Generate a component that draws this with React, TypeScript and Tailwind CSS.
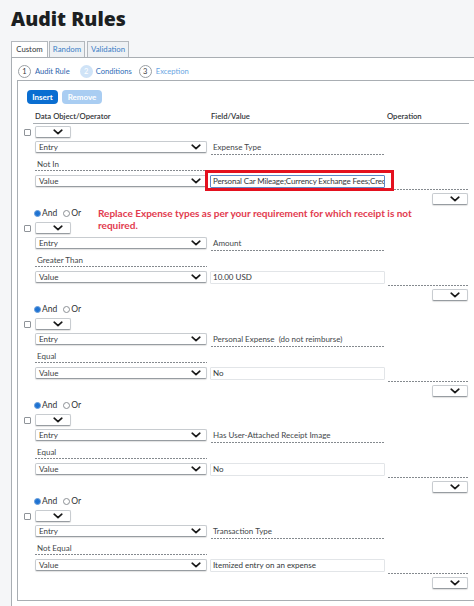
import React from "react";

const DASH =
  "h-px w-full bg-[linear-gradient(to_right,#858a8f_60%,transparent_60%)] bg-[length:3px_1px] bg-repeat-x";

function Chevron() {
  return (
    <svg width="10" height="6" viewBox="0 0 10 6" className="shrink-0">
      <path
        d="M1.2 1.2 L5 4.6 L8.8 1.2"
        fill="none"
        stroke="#1a1a1a"
        strokeWidth="1.7"
        strokeLinecap="round"
        strokeLinejoin="round"
      />
    </svg>
  );
}

function SmallSelect() {
  return (
    <div className="w-[36px] h-[12px] bg-white border border-[#c8ccd0] border-b-[#979ca1] rounded-[2px] shadow-[0_1px_1px_rgba(0,0,0,0.12)] flex items-center justify-end pr-[7px]">
      <Chevron />
    </div>
  );
}

function BigSelect({ label }: { label: string }) {
  return (
    <div className="w-[172px] h-[12px] shrink-0 bg-white border border-[#c8ccd0] border-b-[#979ca1] rounded-[2px] shadow-[0_1px_1px_rgba(0,0,0,0.12)] flex items-center justify-between pl-[3px] pr-[5px]">
      <span className="text-[8px] leading-[10px] text-[#3a3d40]">{label}</span>
      <Chevron />
    </div>
  );
}

function Radio({ on }: { on: boolean }) {
  return on ? (
    <span className="w-[7px] h-[7px] rounded-full bg-[#1f73d2] border border-[#6a9fdc] inline-block" />
  ) : (
    <span className="w-[7px] h-[7px] rounded-full bg-white border border-[#8b9095] inline-block" />
  );
}

type Cond = {
  field: string;
  op: string;
  value: string;
  first?: boolean;
};

function Block({ c }: { c: Cond }) {
  return (
    <div className="flex flex-col">
      {c.first ? (
        <div className="ml-[15px] w-[436px] h-[14px] border-b border-[#a9aeb3] flex items-center text-[7.7px] font-semibold text-[#2f3336]">
          <span className="pl-[2px] w-[178px]">Data Object/Operator</span>
          <span className="w-[176px]">Field/Value</span>
          <span>Operation</span>
        </div>
      ) : (
        <div className="h-[14px] flex items-center pl-[16px] text-[8.5px] text-[#2f3336]">
          <Radio on />
          <span className="ml-[1px]">And</span>
          <span className="ml-[6px] flex items-center">
            <Radio on={false} />
          </span>
          <span className="ml-[1px]">Or</span>
        </div>
      )}
      <div className="mt-[2px] h-[12px] flex items-center">
        <div className="w-[17px] flex items-center">
          <span className="ml-[6px] w-[7px] h-[7px] bg-white border border-[#8f9499] rounded-[1px]" />
        </div>
        <SmallSelect />
      </div>
      <div className="mt-[3px] h-[14px] flex items-start pl-[17px]">
        <BigSelect label="Entry" />
        <div className="ml-[4px] w-[173px]">
          <div className="h-[13px] leading-[12px] pl-[2px] text-[8px] text-[#43474a] whitespace-pre">
            {c.field}
          </div>
          <div className={DASH} />
        </div>
      </div>
      <div className="h-[16px] pl-[17px]">
        <div className="w-[172px]">
          <div className="h-[15px] pt-[3px] leading-[12px] pl-[2px] text-[8px] text-[#43474a]">
            {c.op}
          </div>
          <div className={DASH} />
        </div>
      </div>
      <div className="mt-[4px] h-[15px] flex items-start pl-[17px]">
        <BigSelect label="Value" />
        <div className="relative ml-[3px] w-[175px] h-[13px]">
          <div
            className={
              "w-full h-full bg-white rounded-[1px] pl-[2px] text-[8px] leading-[11px] text-[#33373a] whitespace-nowrap overflow-hidden " +
              (c.first
                ? "border border-[#5d86c6] tracking-[-0.15px]"
                : "border border-[#e2e5e8]")
            }
          >
            {c.value}
          </div>
          {c.first && (
            <div className="absolute -left-[5px] -top-[5px] -right-[9px] -bottom-[3px] border-[3px] border-[#e4111f] pointer-events-none" />
          )}
        </div>
        <div className="ml-[3px] w-[81px] h-[15px] flex flex-col justify-end">
          <div className={DASH} />
        </div>
      </div>
      <div className="mt-[3px] h-[12px] ml-[414px]">
        <SmallSelect />
      </div>
      <div className="h-[1px]" />
    </div>
  );
}

const conds: Cond[] = [
  {
    field: "Expense Type",
    op: "Not In",
    value: "Personal Car Mileage;Currency Exchange Fees;Crec",
    first: true,
  },
  { field: "Amount", op: "Greater Than", value: "10.00 USD" },
  { field: "Personal Expense  (do not reimburse)", op: "Equal", value: "No" },
  { field: "Has User-Attached Receipt Image", op: "Equal", value: "No" },
  { field: "Transaction Type", op: "Not Equal", value: "Itemized entry on an expense" },
];

function StepCircle({ n, filled }: { n: number; filled?: boolean }) {
  return filled ? (
    <span className="w-[13px] h-[13px] rounded-full bg-[#cfe3f7] text-white text-[7.5px] flex items-center justify-center">
      {n}
    </span>
  ) : (
    <span className="w-[13px] h-[13px] rounded-full bg-white border border-[#9a9fa4] text-[#3a3d40] text-[7.5px] flex items-center justify-center">
      {n}
    </span>
  );
}

export default function App() {
  return (
    <div className="w-[474px] h-[606px] overflow-hidden bg-[#f5f6f8] font-['Lato',sans-serif] text-[#32363a]">
      <div className="h-[41px] pl-[11px] pt-[5px]">
        <h1 className="font-['Open_Sans',sans-serif] font-extrabold text-[19.5px] leading-[28px] text-[#1c1f22]">
          Audit Rules
        </h1>
      </div>
      <div className="h-[16px] pl-[11px] flex items-end text-[7.8px]">
        <div className="w-[37px] h-[16px] bg-white border border-b-0 border-[#b3b8bd] flex items-center justify-center text-[#32363a]">
          Custom
        </div>
        <div className="ml-[1px] w-[36px] h-[16px] bg-[#eef1f4] border border-b-0 border-[#b3b8bd] flex items-center justify-center text-[#3a7dc6]">
          Random
        </div>
        <div className="ml-[2px] w-[42px] h-[16px] bg-[#eef1f4] border border-b-0 border-[#b3b8bd] flex items-center justify-center text-[#3a7dc6]">
          Validation
        </div>
      </div>
      <div className="ml-[11px] border-l border-t border-[#a9aeb3] bg-white h-[560px]">
        <div className="h-[22px] pl-[6px] pt-[7px] flex items-start text-[7.6px]">
          <StepCircle n={1} />
          <span className="ml-[4px] leading-[13px] text-[#2f65ad]">Audit Rule</span>
          <span className="ml-[10px]">
            <StepCircle n={2} filled />
          </span>
          <span className="ml-[3px] leading-[13px] text-[#2f6db7]">Conditions</span>
          <span className="ml-[7px]">
            <StepCircle n={3} />
          </span>
          <span className="ml-[4px] leading-[13px] text-[#6aa6e2]">Exception</span>
        </div>
        <div className="relative ml-[5px] border-l border-t border-b border-[#a9aeb3] pb-[10px]">
          <div className="pt-[9px] pl-[9px] flex items-center">
            <div className="w-[31px] h-[14px] rounded-[4px] bg-[#0a6ed1] text-white text-[8px] font-bold flex items-center justify-center">
              Insert
            </div>
            <div className="ml-[4px] w-[40px] h-[14px] rounded-[4px] bg-[#a9cdf2] text-white text-[8px] font-bold flex items-center justify-center">
              Remove
            </div>
          </div>
          <div className="mt-[6px]">
            {conds.map((c, i) => (
              <Block key={i} c={c} />
            ))}
          </div>
          <div className="absolute left-[80px] top-[126px] text-[10px] leading-[12px] font-bold text-[#e23a4e] whitespace-nowrap">
            Replace Expense types as per your requirement for which receipt is not
            <br />
            required.
          </div>
        </div>
      </div>
    </div>
  );
}
